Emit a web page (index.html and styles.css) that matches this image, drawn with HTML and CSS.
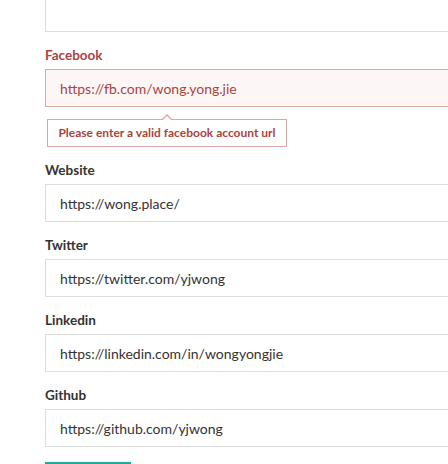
FILE: index.html
```html
<!DOCTYPE html>
<html>
<head>
<meta charset="utf-8">
<link rel="stylesheet" href="styles.css">
</head>
<body>
<form class="form">
  <div class="group group-first">
    <textarea class="control area"></textarea>
  </div>
  <div class="group has-error">
    <label class="label">Facebook</label>
    <input class="control" type="text" value="https://fb.com/wong.yong.jie">
    <div class="tip">Please enter a valid facebook account url</div>
  </div>
  <div class="group">
    <label class="label">Website</label>
    <input class="control" type="text" value="https://wong.place/">
  </div>
  <div class="group">
    <label class="label">Twitter</label>
    <input class="control" type="text" value="https://twitter.com/yjwong">
  </div>
  <div class="group">
    <label class="label">Linkedin</label>
    <input class="control" type="text" value="https://linkedin.com/in/wongyongjie">
  </div>
  <div class="group">
    <label class="label">Github</label>
    <input class="control" type="text" value="https://github.com/yjwong">
  </div>
  <button class="btn" type="button">Save</button>
</form>
</body>
</html>
```
FILE: styles.css
```css
html, body {
  margin: 0;
  padding: 0;
  background: #fff;
  overflow: hidden;
}
body {
  font-family: Lato, "Open Sans", sans-serif;
  color: #333;
}
.form {
  padding-left: 45px;
  width: 480px;
  margin-top: -30px;
}
.group {
  margin-bottom: 15px;
}
.label {
  display: block;
  font-size: 13.5px;
  font-weight: 700;
  line-height: 17px;
  margin-bottom: 5px;
  color: #333;
}
.control {
  display: block;
  box-sizing: border-box;
  width: 100%;
  height: 38px;
  margin: 0;
  padding: 0 14px;
  border: 1px solid #ddd;
  border-radius: 0;
  background: #fff;
  font-family: Lato, "Open Sans", sans-serif;
  font-size: 14px;
  color: #333;
  outline: none;
}
.area {
  height: 62px;
  resize: none;
}
.has-error .label {
  color: #a94442;
}
.has-error .control {
  border-color: #dca7a7;
  background: #fdf6f6;
  color: #a94442;
}
.tip {
  position: relative;
  display: inline-block;
  box-sizing: border-box;
  margin: 12px 0 0 2px;
  width: 240px;
  height: 28px;
  line-height: 26px;
  border: 1px solid #dca7a7;
  background: #fff;
  color: #a94442;
  font-size: 12px;
  font-weight: 700;
  text-align: center;
  vertical-align: top;
}
.tip::before,
.tip::after {
  content: "";
  position: absolute;
  left: 50%;
  width: 0;
  height: 0;
  border-left: 5px solid transparent;
  border-right: 5px solid transparent;
  margin-left: -5px;
}
.tip::before {
  top: -6px;
  border-bottom: 5px solid #dca7a7;
}
.tip::after {
  top: -4px;
  border-bottom: 4px solid #fff;
  border-left-width: 4px;
  border-right-width: 4px;
  margin-left: -4px;
}
.btn {
  display: block;
  width: 86px;
  height: 40px;
  padding: 12px 0 8px;
  border: 0;
  background: #1aaa9e;
  color: #fff;
  font-family: Lato, sans-serif;
  font-size: 14px;
  font-weight: 700;
  line-height: 20px;
}
```
